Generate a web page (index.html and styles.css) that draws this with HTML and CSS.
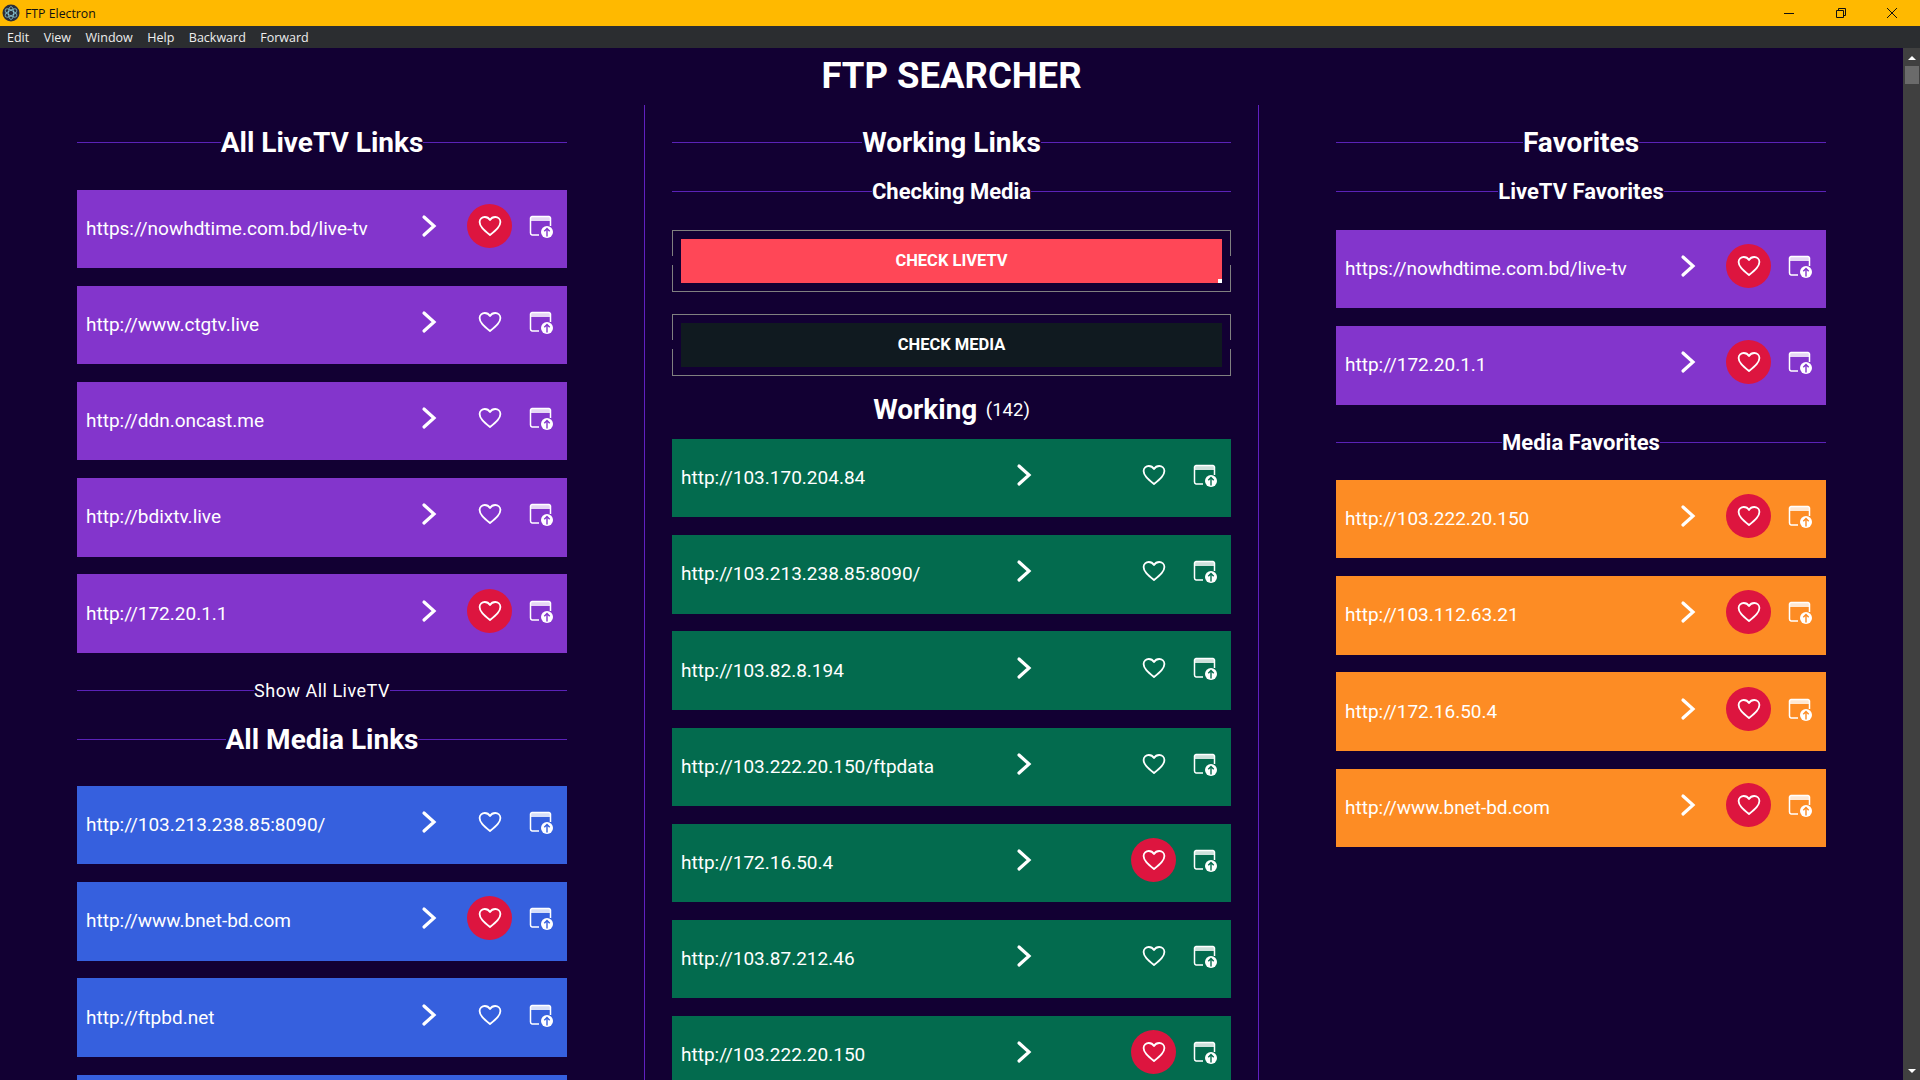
FILE: index.html
```html
<!DOCTYPE html>
<html lang="en">
<head>
<meta charset="utf-8">
<title>FTP Electron</title>
<link rel="stylesheet" href="styles.css">
</head>
<body>
<svg class="defs" width="0" height="0" aria-hidden="true">
  <symbol id="i-arrow" viewBox="0 0 16 24"><path d="M3 3l10 9-10 9" fill="none" stroke="#fff" stroke-width="3.200" stroke-linecap="round" stroke-linejoin="miter"/></symbol>
  <symbol id="i-heart" viewBox="0 0 24 24"><path d="M12 21C5.500 15.600 1.600 12.200 1.600 8 1.600 4.900 4 3 6.800 3c2.100 0 4 1 5.200 3 1.200-2 3.100-3 5.200-3 2.800 0 5.200 1.900 5.200 5 0 4.200-3.900 7.600-10.400 13z" fill="none" stroke="#fff" stroke-width="1.800" stroke-linejoin="round"/></symbol>
  <symbol id="i-open" viewBox="0 0 24 24"><path d="M10 20H3A2 2 0 0 1 1.500 18V3A2 2 0 0 1 3 1.500H20A2 2 0 0 1 21.500 3V11" fill="none" stroke="#fff" stroke-width="1.500"/><rect x="2" y="2" width="19" height="4" fill="#fff" fill-opacity=".8"/><circle cx="18" cy="17" r="6" fill="#fff"/><path d="M18 21.500V13.500M15.300 16.200L18 13.500l2.700 2.700" fill="none" stroke="currentColor" stroke-width="1.400"/></symbol>
</svg>
<div class="titlebar">
  <svg class="applogo" viewBox="0 0 18 18"><circle cx="9" cy="9" r="8.500" fill="#2b2e3a"/><g fill="none" stroke="#9feaf9" stroke-opacity=".6" stroke-width="1"><ellipse cx="9" cy="9" rx="6.500" ry="2.600" transform="rotate(30 9 9)"/><ellipse cx="9" cy="9" rx="6.500" ry="2.600" transform="rotate(90 9 9)"/><ellipse cx="9" cy="9" rx="6.500" ry="2.600" transform="rotate(150 9 9)"/></g></svg>
  <span class="apptitle">FTP Electron</span>
  <div class="winbtns">
    <svg viewBox="0 0 10 10" width="10" height="10"><path d="M0 5.500H10" stroke="#111" stroke-width="1"/></svg>
    <svg viewBox="0 0 10 10" width="10" height="10"><path d="M.5 2.500h7v7h-7zM2.500 2.500V.5h7v7H7.500" fill="none" stroke="#111" stroke-width="1"/></svg>
    <svg viewBox="0 0 10 10" width="10" height="10"><path d="M0 0l10 10M10 0L0 10" stroke="#111" stroke-width="1"/></svg>
  </div>
</div>
<nav class="menubar">
  <span>Edit</span><span>View</span><span>Window</span><span>Help</span><span>Backward</span><span>Forward</span>
</nav>
<div class="viewport">
  <main class="page">
    <h1 class="apphead">FTP SEARCHER</h1>
    <div class="columns">
      <section class="col">
        <h2 class="rule big">All LiveTV Links</h2>
        <div class="list list-first">
          <div class="card purple"><span class="url">https://nowhdtime.com.bd/live-tv</span><svg class="arrow"><use href="#i-arrow"/></svg><span class="heart on"><svg><use href="#i-heart"/></svg></span><svg class="open"><use href="#i-open"/></svg></div>
          <div class="card purple"><span class="url">http://www.ctgtv.live</span><svg class="arrow"><use href="#i-arrow"/></svg><span class="heart"><svg><use href="#i-heart"/></svg></span><svg class="open"><use href="#i-open"/></svg></div>
          <div class="card purple"><span class="url">http://ddn.oncast.me</span><svg class="arrow"><use href="#i-arrow"/></svg><span class="heart"><svg><use href="#i-heart"/></svg></span><svg class="open"><use href="#i-open"/></svg></div>
          <div class="card purple"><span class="url">http://bdixtv.live</span><svg class="arrow"><use href="#i-arrow"/></svg><span class="heart"><svg><use href="#i-heart"/></svg></span><svg class="open"><use href="#i-open"/></svg></div>
          <div class="card purple"><span class="url">http://172.20.1.1</span><svg class="arrow"><use href="#i-arrow"/></svg><span class="heart on"><svg><use href="#i-heart"/></svg></span><svg class="open"><use href="#i-open"/></svg></div>
        </div>
        <h3 class="rule show">Show All LiveTV</h3>
        <h2 class="rule big media-head">All Media Links</h2>
        <div class="list list-media">
          <div class="card blue"><span class="url">http://103.213.238.85:8090/</span><svg class="arrow"><use href="#i-arrow"/></svg><span class="heart"><svg><use href="#i-heart"/></svg></span><svg class="open"><use href="#i-open"/></svg></div>
          <div class="card blue"><span class="url">http://www.bnet-bd.com</span><svg class="arrow"><use href="#i-arrow"/></svg><span class="heart on"><svg><use href="#i-heart"/></svg></span><svg class="open"><use href="#i-open"/></svg></div>
          <div class="card blue"><span class="url">http://ftpbd.net</span><svg class="arrow"><use href="#i-arrow"/></svg><span class="heart"><svg><use href="#i-heart"/></svg></span><svg class="open"><use href="#i-open"/></svg></div>
          <div class="card blue"></div>
        </div>
      </section>
      <section class="col mid">
        <h2 class="rule big">Working Links</h2>
        <h3 class="rule sub">Checking Media</h3>
        <div class="checkbox first"><button class="checkbtn red">CHECK LIVETV</button><i class="corner"></i></div>
        <div class="checkbox"><button class="checkbtn dark">CHECK MEDIA</button></div>
        <div class="working"><b>Working</b><span>(142)</span></div>
        <div class="list">
          <div class="card green"><span class="url">http://103.170.204.84</span><svg class="arrow"><use href="#i-arrow"/></svg><span class="heart"><svg><use href="#i-heart"/></svg></span><svg class="open"><use href="#i-open"/></svg></div>
          <div class="card green"><span class="url">http://103.213.238.85:8090/</span><svg class="arrow"><use href="#i-arrow"/></svg><span class="heart"><svg><use href="#i-heart"/></svg></span><svg class="open"><use href="#i-open"/></svg></div>
          <div class="card green"><span class="url">http://103.82.8.194</span><svg class="arrow"><use href="#i-arrow"/></svg><span class="heart"><svg><use href="#i-heart"/></svg></span><svg class="open"><use href="#i-open"/></svg></div>
          <div class="card green"><span class="url">http://103.222.20.150/ftpdata</span><svg class="arrow"><use href="#i-arrow"/></svg><span class="heart"><svg><use href="#i-heart"/></svg></span><svg class="open"><use href="#i-open"/></svg></div>
          <div class="card green"><span class="url">http://172.16.50.4</span><svg class="arrow"><use href="#i-arrow"/></svg><span class="heart on"><svg><use href="#i-heart"/></svg></span><svg class="open"><use href="#i-open"/></svg></div>
          <div class="card green"><span class="url">http://103.87.212.46</span><svg class="arrow"><use href="#i-arrow"/></svg><span class="heart"><svg><use href="#i-heart"/></svg></span><svg class="open"><use href="#i-open"/></svg></div>
          <div class="card green"><span class="url">http://103.222.20.150</span><svg class="arrow"><use href="#i-arrow"/></svg><span class="heart on"><svg><use href="#i-heart"/></svg></span><svg class="open"><use href="#i-open"/></svg></div>
        </div>
      </section>
      <section class="col">
        <h2 class="rule big">Favorites</h2>
        <h3 class="rule sub">LiveTV Favorites</h3>
        <div class="list list-fav">
          <div class="card purple"><span class="url">https://nowhdtime.com.bd/live-tv</span><svg class="arrow"><use href="#i-arrow"/></svg><span class="heart on"><svg><use href="#i-heart"/></svg></span><svg class="open"><use href="#i-open"/></svg></div>
          <div class="card purple"><span class="url">http://172.20.1.1</span><svg class="arrow"><use href="#i-arrow"/></svg><span class="heart on"><svg><use href="#i-heart"/></svg></span><svg class="open"><use href="#i-open"/></svg></div>
        </div>
        <h3 class="rule sub mediafav">Media Favorites</h3>
        <div class="list list-fav2">
          <div class="card orange"><span class="url">http://103.222.20.150</span><svg class="arrow"><use href="#i-arrow"/></svg><span class="heart on"><svg><use href="#i-heart"/></svg></span><svg class="open"><use href="#i-open"/></svg></div>
          <div class="card orange"><span class="url">http://103.112.63.21</span><svg class="arrow"><use href="#i-arrow"/></svg><span class="heart on"><svg><use href="#i-heart"/></svg></span><svg class="open"><use href="#i-open"/></svg></div>
          <div class="card orange"><span class="url">http://172.16.50.4</span><svg class="arrow"><use href="#i-arrow"/></svg><span class="heart on"><svg><use href="#i-heart"/></svg></span><svg class="open"><use href="#i-open"/></svg></div>
          <div class="card orange"><span class="url">http://www.bnet-bd.com</span><svg class="arrow"><use href="#i-arrow"/></svg><span class="heart on"><svg><use href="#i-heart"/></svg></span><svg class="open"><use href="#i-open"/></svg></div>
        </div>
      </section>
    </div>
  </main>
  <div class="scrollbar"><i class="up"></i><i class="thumb"></i><i class="down"></i></div>
</div>
</body>
</html>
```
FILE: styles.css
```css
* { box-sizing: border-box; }
html, body { margin: 0; height: 1080px; overflow: hidden; }
body { display: flex; flex-direction: column; background: #120033; color: #fff; font-family: Roboto, sans-serif; }
.defs { position: absolute; }
.titlebar { height: 26px; flex: none; background: #ffb900; display: flex; align-items: center; padding-left: 2px; color: #111; font: 12.300px "Open Sans", sans-serif; }
.applogo { width: 18px; height: 18px; margin-right: 5px; }
.winbtns { margin-left: auto; display: flex; gap: 41.500px; padding-right: 23px; align-items: center; }
.menubar { height: 22px; flex: none; background: #2b2d30; display: flex; align-items: center; gap: 14.500px; padding-left: 7px; color: #eee; font: 12.500px "Open Sans", sans-serif; }
.viewport { flex: 1; display: flex; min-height: 0; overflow: hidden; }
.page { flex: 1; min-width: 0; }
.apphead { margin: 0; height: 57px; padding-top: 7px; text-align: center; font-size: 36.500px; line-height: 42px; font-weight: 700; }
.columns { display: grid; grid-template-columns: 644px 615px 644px; }
.col { padding: 0 77px; min-height: 1000px; }
.col.mid { padding: 0 27px; border-left: 1px solid #6020c0; border-right: 1px solid #6020c0; }
.rule { display: flex; align-items: center; margin: 0; font-weight: 700; white-space: nowrap; }
.rule::before, .rule::after { content: ""; flex: 1; height: 1px; background: #5a22b8; }
.big { font-size: 28px; height: 74px; }
.sub { font-size: 22px; height: 24px; }
.show { font-size: 18px; font-weight: 400; letter-spacing: .5px; height: 30px; margin-top: 23px; }
.media-head { height: 68px; }
.list { display: flex; flex-direction: column; gap: 17.800px; }
.list-first { margin-top: 10.600px; }
.list-media { margin-top: 12.300px; }
.list-fav { margin-top: 27px; }
.mediafav { margin-top: 26px; }
.list-fav2 { margin-top: 25.500px; }
.card { --bg: #8335cc; height: 78.400px; flex: none; display: flex; align-items: center; padding: 0 14.500px 0 9px; background: var(--bg); font-size: 19px; font-weight: 400; }
.purple { --bg: #8335cc; }
.blue { --bg: #3660de; }
.green { --bg: #036b4e; }
.orange { --bg: #fd8c24; }
.url { flex: none; width: 334.500px; white-space: nowrap; padding-bottom: 1px; }
.arrow { width: 16px; height: 24px; margin-bottom: 6px; }
.heart { width: 45px; height: 44px; border-radius: 50%; display: flex; align-items: center; justify-content: center; margin: 0 16.500px 6px auto; }
.heart.on { background: #dd153f; }
.heart svg { width: 24px; height: 24px; }
.open { width: 24px; height: 24px; margin-bottom: 4px; color: var(--bg); }
.checkbox { border: 1px solid #808080; padding: 8px; margin-top: 22px; position: relative; height: 62px; }
.checkbox::before { content: ""; position: absolute; left: -1px; right: -1px; top: 25px; height: 9px; border-left: 1px solid #120033; border-right: 1px solid #120033; }
.checkbox.first { margin-top: 27px; }
.checkbtn { display: block; width: 100%; height: 100%; border: 0; padding: 0 0 2px; color: #fff; font: 700 16.500px Roboto, sans-serif; }
.red { background: #ff4757; }
.dark { background: #101a20; }
.corner { position: absolute; right: 8px; bottom: 8px; width: 4px; height: 4px; background: #fff; }
.working { display: flex; justify-content: center; align-items: center; gap: 8.500px; height: 63px; padding-top: 3px; }
.working b { font-size: 28px; }
.working span { font-size: 18.500px; padding-top: 2px; }
.scrollbar { width: 17px; flex: none; background: #404040; display: flex; flex-direction: column; align-items: center; }
.up, .down { width: 0; height: 0; border-left: 4px solid transparent; border-right: 4px solid transparent; }
.up { border-bottom: 4px solid #fff; margin-top: 8px; }
.thumb { width: 14px; height: 18px; background: #6b6b6b; margin-top: 6px; }
.down { border-top: 4px solid #fff; margin-top: auto; margin-bottom: 7px; }
```
